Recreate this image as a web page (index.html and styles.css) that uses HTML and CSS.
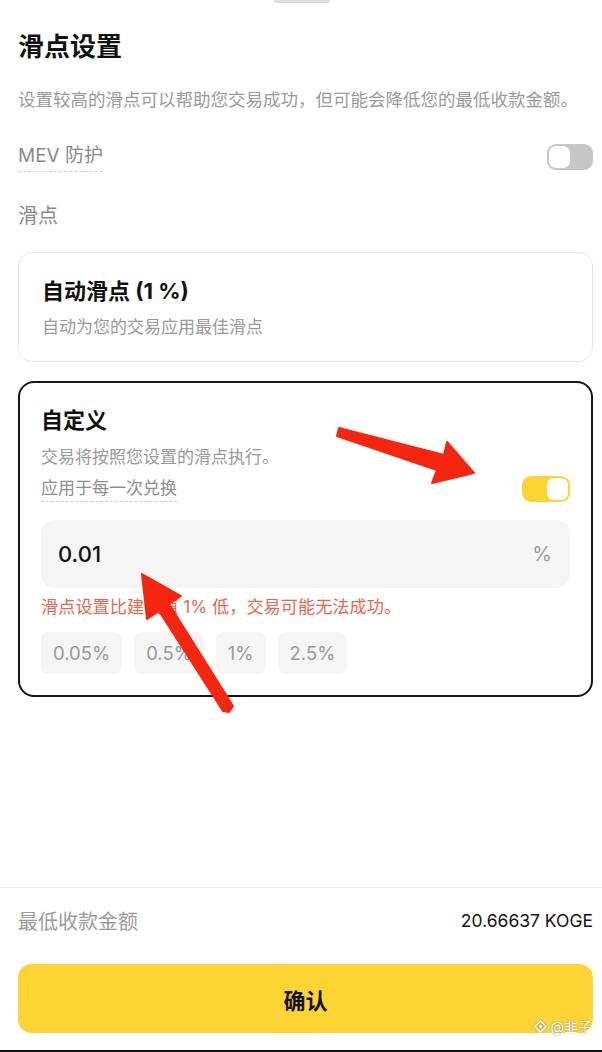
FILE: index.html
```html
<!DOCTYPE html>
<html lang="zh-CN">
<head>
<meta charset="utf-8">
<title>滑点设置</title>
<link rel="stylesheet" href="styles.css">
</head>
<body>
<div class="page">
  <main class="content">
    <div class="handle"></div>
    <h1 class="title">滑点设置</h1>
    <p class="desc">设置较高的滑点可以帮助您交易成功，但可能会降低您的最低收款金额。</p>
    <div class="row mev">
      <span class="dotted mev-label">MEV 防护</span>
      <span class="toggle off"><span class="knob"></span></span>
    </div>
    <div class="label">滑点</div>
    <div class="card auto">
      <div class="card-title">自动滑点 (1 %)</div>
      <div class="card-sub">自动为您的交易应用最佳滑点</div>
    </div>
    <div class="card custom">
      <div class="card-title">自定义</div>
      <div class="card-sub">交易将按照您设置的滑点执行。</div>
      <div class="row apply">
        <span class="dotted apply-label">应用于每一次兑换</span>
        <span class="toggle on"><span class="knob"></span></span>
      </div>
      <div class="input"><span class="val">0.01</span><span class="pct">%</span></div>
      <div class="warn">滑点设置比建议值 1% 低，交易可能无法成功。</div>
      <div class="chips">
        <span class="chip">0.05%</span>
        <span class="chip">0.5%</span>
        <span class="chip">1%</span>
        <span class="chip">2.5%</span>
      </div>
    </div>
  </main>
  <footer class="footer">
    <div class="row min">
      <span class="min-label">最低收款金额</span>
      <span class="min-val">20.66637 KOGE</span>
    </div>
    <button class="confirm">确认</button>
  </footer>
  <div class="bottom-line"></div>
</div>
<svg class="arrows" width="602" height="1052" viewBox="0 0 602 1052" aria-hidden="true">
  <polygon points="339,428 444,455 447,442 474,473 432,483 437,470 337,436" />
  <polygon points="142,574 181,596 169,604 233,706 229,712 223,711 159,611 147,619" />
</svg>
<div class="watermark">
  <svg width="13" height="13" viewBox="0 0 14 14"><path d="M7 1 L13 7 L7 13 L1 7 Z" fill="none" stroke="#fff" stroke-width="1.6"/><circle cx="7" cy="7" r="1.6" fill="#fff"/></svg>
  <span>@韭子</span>
</div>
</body>
</html>
```

FILE: styles.css
```css
* { box-sizing: border-box; }
html, body { margin: 0; padding: 0; background: #fff; }
body {
  width: 602px;
  height: 1052px;
  position: relative;
  overflow: hidden;
  font-family: "Inter", "Noto Sans CJK SC", "Noto Sans", sans-serif;
  color: #111;
}
.page {
  height: 1052px;
  display: flex;
  flex-direction: column;
}
.content {
  flex: 1;
  padding: 0 9px 0 18px;
}
.handle {
  width: 56px;
  height: 3px;
  margin: 0 auto;
  background: #dedede;
  border-radius: 0 0 2px 2px;
  position: relative;
  left: -4px;
}
.title {
  margin: 28px 0 0;
  font-size: 26px;
  line-height: 32px;
  font-weight: 700;
  color: #111;
}
.desc {
  margin: 25px 0 0;
  font-size: 17.5px;
  line-height: 24px;
  color: #9a9a9a;
}
.row {
  display: flex;
  justify-content: space-between;
  align-items: flex-start;
}
.mev { margin-top: 32px; }
.dotted {
  display: inline-block;
  border-bottom: 1px dashed #cfcfcf;
}
.mev-label {
  font-size: 19px;
  line-height: 24px;
  padding-bottom: 3px;
  color: #8a8a8a;
}
.toggle {
  display: flex;
  width: 46px;
  height: 26px;
  border-radius: 9px;
  padding: 2px;
}
.toggle .knob {
  width: 21px;
  height: 22px;
  background: #fff;
  border-radius: 7px;
}
.toggle.off { background: #c6c6c6; justify-content: flex-start; }
.toggle.on { background: #fcd535; justify-content: flex-end; width: 48px; }
.label {
  margin-top: 30px;
  font-size: 20px;
  line-height: 28px;
  color: #8a8a8a;
}
.card {
  background: #fff;
}
.card.auto {
  margin-top: 22px;
  border: 1px solid #e9e9e9;
  border-radius: 14px;
  padding: 23px 23px 22px;
}
.card.custom {
  margin-top: 19px;
  border: 2px solid #161616;
  border-radius: 16px;
  padding: 22px 21px 21px;
}
.card-title {
  font-size: 22px;
  line-height: 30px;
  font-weight: 700;
  color: #111;
}
.card-sub {
  font-size: 17px;
  line-height: 24px;
  color: #9a9a9a;
}
.auto .card-sub { margin-top: 9px; }
.custom .card-sub { margin-top: 10px; }
.apply { margin-top: 7px; }
.apply-label {
  font-size: 17px;
  line-height: 24px;
  padding-bottom: 1px;
  color: #8f8f8f;
}
.input {
  margin-top: 18px;
  height: 68px;
  background: #f5f5f5;
  border-radius: 14px;
  display: flex;
  justify-content: space-between;
  align-items: center;
  padding: 0 18px 0 17px;
}
.input .val {
  font-size: 22px;
  font-weight: 500;
  color: #111;
}
.input .pct {
  font-size: 20px;
  color: #9a9a9a;
}
.warn {
  margin-top: 7px;
  font-size: 17.2px;
  line-height: 24px;
  color: #e8674c;
}
.chips {
  margin-top: 13px;
  display: flex;
  gap: 12px;
}
.chip {
  height: 42px;
  display: flex;
  align-items: center;
  padding: 0 12px;
  background: #f5f5f5;
  border-radius: 8px;
  font-size: 18.5px;
  color: #9a9a9a;
}
.footer {
  border-top: 1px solid #efefef;
  padding: 18px 9px 17px 18px;
}
.min { align-items: center; height: 28px; }
.min-label {
  font-size: 20px;
  color: #9a9a9a;
}
.min-val {
  font-size: 17.5px;
  color: #111;
}
.confirm {
  display: block;
  width: 100%;
  height: 69px;
  margin-top: 30px;
  border: none;
  border-radius: 14px;
  background: #fcd535;
  font-family: "Inter", "Noto Sans CJK SC", sans-serif;
  font-size: 22px;
  font-weight: 700;
  color: #111;
}
.bottom-line {
  height: 2px;
  background: #111;
}
.arrows {
  position: absolute;
  left: 0;
  top: 0;
  pointer-events: none;
}
.arrows polygon {
  fill: #f5260f;
  stroke: #f5260f;
  stroke-width: 2;
  stroke-linejoin: round;
}
.watermark {
  position: absolute;
  right: 10px;
  top: 1016px;
  display: flex;
  align-items: center;
  gap: 3px;
  font-size: 14px;
  color: #fff;
  text-shadow: 0 0 1px #888, 0 0 1px #888;
}
.watermark svg { filter: drop-shadow(0 0 1px #888); }
```
